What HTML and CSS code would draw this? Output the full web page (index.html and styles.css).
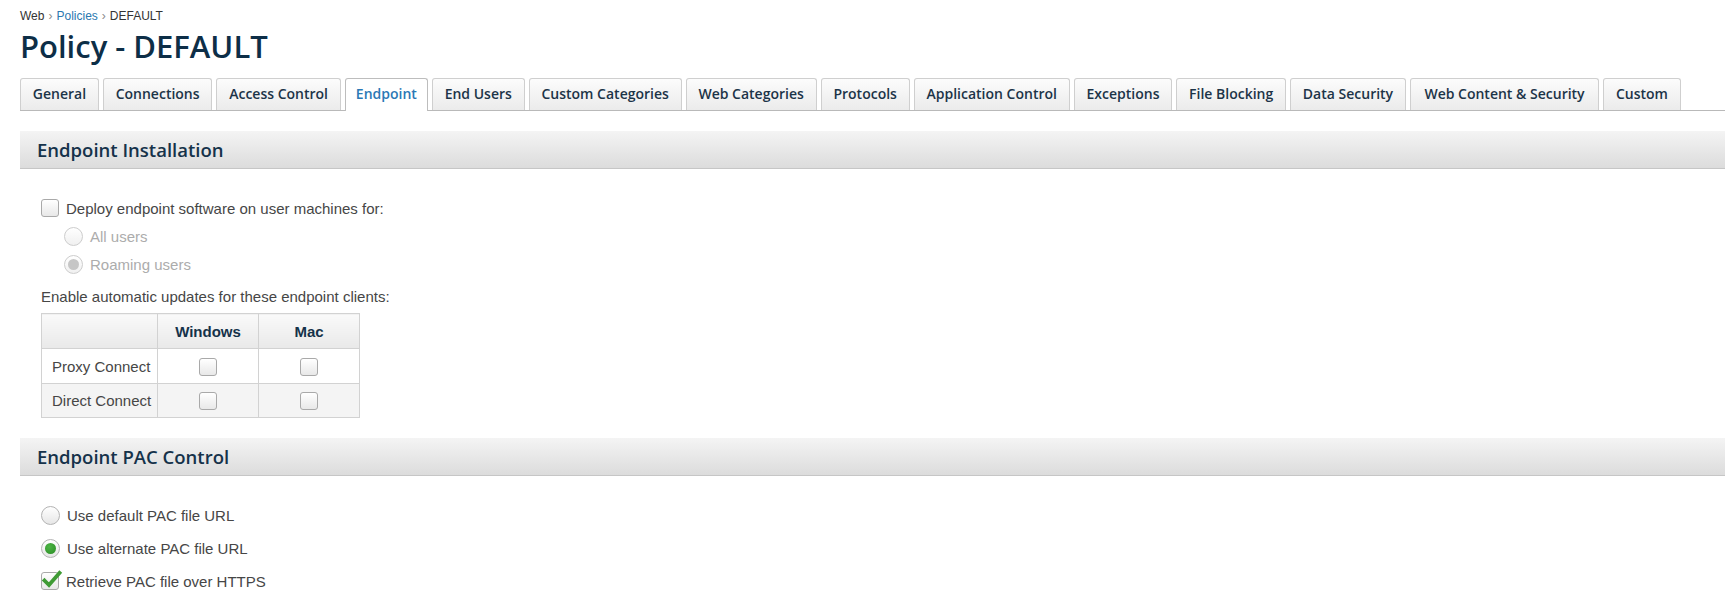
FILE: index.html
```html
<!DOCTYPE html>
<html>
<head>
<meta charset="utf-8">
<title>Policy - DEFAULT</title>
<link rel="stylesheet" href="styles.css">
</head>
<body>
<div class="page">
  <div class="crumbs"><span>Web</span><span class="sep">›</span><a class="link">Policies</a><span class="sep">›</span><span>DEFAULT</span></div>
  <h1 class="title">Policy - DEFAULT</h1>
  <div class="tabs">
    <div class="tab">General</div>
    <div class="tab">Connections</div>
    <div class="tab">Access Control</div>
    <div class="tab active">Endpoint</div>
    <div class="tab">End Users</div>
    <div class="tab">Custom Categories</div>
    <div class="tab">Web Categories</div>
    <div class="tab">Protocols</div>
    <div class="tab">Application Control</div>
    <div class="tab">Exceptions</div>
    <div class="tab">File Blocking</div>
    <div class="tab">Data Security</div>
    <div class="tab wide">Web Content &amp; Security</div>
    <div class="tab">Custom</div>
  </div>

  <div class="section-head first">Endpoint Installation</div>
  <div class="section-body">
    <div class="opt"><span class="cb"></span><span>Deploy endpoint software on user machines for:</span></div>
    <div class="opt sub disabled"><span class="rb"></span><span>All users</span></div>
    <div class="opt sub disabled"><span class="rb on"></span><span>Roaming users</span></div>
    <div class="note">Enable automatic updates for these endpoint clients:</div>
    <table class="grid">
      <thead>
        <tr><th class="c1"></th><th class="c2">Windows</th><th class="c3">Mac</th></tr>
      </thead>
      <tbody>
        <tr><td class="lbl">Proxy Connect</td><td class="mid"><span class="cb"></span></td><td class="mid"><span class="cb"></span></td></tr>
        <tr class="alt"><td class="lbl">Direct Connect</td><td class="mid"><span class="cb"></span></td><td class="mid"><span class="cb"></span></td></tr>
      </tbody>
    </table>
  </div>

  <div class="section-head second">Endpoint PAC Control</div>
  <div class="section-body pac">
    <div class="opt"><span class="rb"></span><span>Use default PAC file URL</span></div>
    <div class="opt"><span class="rb green"></span><span>Use alternate PAC file URL</span></div>
    <div class="opt"><span class="cb checked"><svg class="tick" viewBox="0 0 22 22" width="22" height="22"><path d="M3.5 11.5 L8 16 L18.5 4" fill="none" stroke="#3f9b35" stroke-width="3.8" stroke-linecap="square" stroke-linejoin="miter"/></svg></span><span>Retrieve PAC file over HTTPS</span></div>
  </div>
</div>
</body>
</html>
```
FILE: styles.css
```css
html, body {
  margin: 0;
  padding: 0;
  background: #ffffff;
}
.page {
  padding: 8px 0 0 20px;
  font-family: "Liberation Sans", Arial, sans-serif;
  color: #464646;
  font-size: 15px;
}
.crumbs {
  font-size: 12px;
  line-height: 16px;
  height: 16px;
  color: #333333;
}
.crumbs .sep {
  color: #8a8a8a;
  margin: 0 4px;
}
.crumbs .link {
  color: #2a78b0;
}
.title {
  margin: 4px 0 0 0;
  font-family: "Open Sans", sans-serif;
  font-weight: 600;
  font-size: 31px;
  line-height: 36px;
  height: 36px;
  color: #0d2e47;
}
.tabs {
  margin-top: 14px;
  display: flex;
  align-items: flex-end;
  border-bottom: 1px solid #b9b9b9;
  height: 32px;
}
.tab {
  box-sizing: border-box;
  height: 32px;
  padding: 0 11.8px;
  margin-right: 4px;
  border: 1px solid #cfcfcf;
  border-bottom: none;
  border-radius: 3px 3px 0 0;
  background: linear-gradient(#fcfcfc, #ebebeb);
  font-family: "Open Sans", sans-serif;
  font-weight: 600;
  font-size: 14px;
  line-height: 30px;
  color: #1c3448;
  white-space: nowrap;
}
.tab.wide {
  padding: 0 13.5px;
}
.tab.active {
  height: 33px;
  margin-bottom: -1px;
  padding: 0 10px;
  background: #ffffff;
  border-color: #bdbdbd;
  color: #2a78b5;
}
.section-head {
  margin-top: 21px;
  box-sizing: border-box;
  height: 38px;
  padding-left: 17px;
  background: linear-gradient(#f4f4f4, #dcdcdc);
  border-bottom: 1px solid #c6c6c6;
  font-family: "Open Sans", sans-serif;
  font-weight: 600;
  font-size: 18.5px;
  line-height: 37px;
  color: #15324a;
}
.section-head.first {
  margin-top: 20px;
}
.section-head.second {
  margin-top: 20px;
}
.section-body {
  padding: 28px 0 0 21px;
}
.opt {
  display: flex;
  align-items: center;
  height: 22px;
  gap: 7px;
  margin-bottom: 6px;
}
.opt.sub {
  padding-left: 23px;
}
.opt.disabled {
  color: #acacac;
}
.pac .opt {
  margin-bottom: 11px;
}
.cb {
  position: relative;
  display: inline-block;
  box-sizing: border-box;
  width: 18px;
  height: 18px;
  border: 1px solid #a9a9a9;
  border-radius: 3px;
  background: linear-gradient(#ffffff, #e8e8e8);
  flex: none;
}
.cb .tick {
  position: absolute;
  left: -1px;
  top: -4px;
}
.rb {
  position: relative;
  display: inline-block;
  box-sizing: border-box;
  width: 19px;
  height: 19px;
  border: 1px solid #b3b3b3;
  border-radius: 50%;
  background: linear-gradient(#ffffff, #e6e6e6);
  flex: none;
}
.disabled .rb {
  border-color: #cdcdcd;
  background: linear-gradient(#ffffff, #f0f0f0);
}
.rb.on::after,
.rb.green::after {
  content: "";
  position: absolute;
  left: 3px;
  top: 3px;
  width: 11px;
  height: 11px;
  border-radius: 50%;
  background: #c6c6c6;
}
.rb.green::after {
  background: radial-gradient(circle at 40% 35%, #4cb444, #2a8c25);
}
.note {
  margin-top: 12px;
  height: 20px;
  line-height: 20px;
}
.grid {
  margin-top: 6px;
  border-collapse: collapse;
  font-size: 15px;
}
.grid th, .grid td {
  border: 1px solid #d2d2d2;
  padding: 0;
}
.grid th {
  height: 34px;
  background: linear-gradient(#fafafa, #e9e9e9);
  color: #15324a;
  font-weight: bold;
  text-align: center;
}
.grid .c1 { width: 115px; }
.grid .c2 { width: 100px; }
.grid .c3 { width: 100px; }
.grid td {
  height: 34px;
  color: #464646;
}
.grid tr.alt td {
  background: #f4f4f4;
  height: 33px;
}
.grid .lbl {
  padding-left: 10px;
  text-align: left;
}
.grid .mid {
  text-align: center;
  vertical-align: middle;
}
.grid .mid .cb {
  vertical-align: middle;
}
```
